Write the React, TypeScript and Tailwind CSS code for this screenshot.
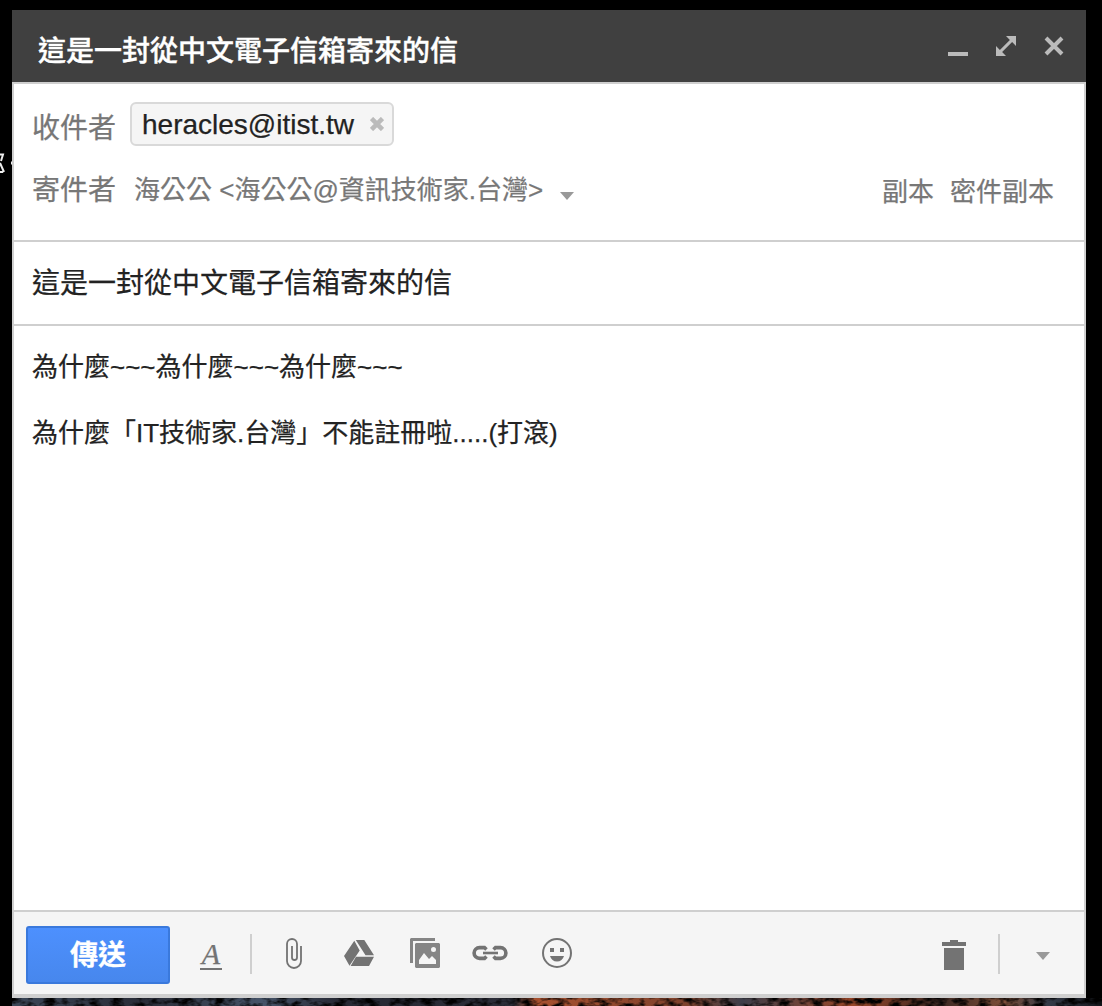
import type { ReactNode } from "react";

const compose = {
  subject: "這是一封從中文電子信箱寄來的信",
  to: "heracles@itist.tw",
  from: "海公公 <海公公@資訊技術家.台灣>",
  lines: ["為什麼~~~為什麼~~~為什麼~~~", "為什麼「IT技術家.台灣」不能註冊啦.....(打滾)"],
};

function Caret({ className = "" }: { className?: string }) {
  return (
    <svg width="14" height="8" viewBox="0 0 14 8" fill="#999" className={`shrink-0 ${className}`}>
      <path d="M0 0h14L7 8z" />
    </svg>
  );
}

function Header() {
  return (
    <header className="flex h-[72px] shrink-0 items-start justify-between bg-[#404040] pl-[26px] pr-[22px] text-white">
      <h1 className="pt-[22px] text-[28px] leading-10 font-medium [-webkit-text-stroke:0.4px]">{compose.subject}</h1>
      <div className="flex gap-7 pt-[26px] text-[#bbb]">
        <svg width="20" height="20" viewBox="0 0 20 20" fill="currentColor">
          <path d="M0 16h20v4H0z" />
        </svg>
        <svg width="20" height="20" viewBox="0 0 20 20" fill="currentColor">
          <path d="M10 0h10v10l-3.9-3.9-10 10L10 20H0V10l3.9 3.9 10-10z" />
        </svg>
        <svg width="20" height="20" viewBox="0 0 20 20" stroke="currentColor" strokeWidth="4">
          <path d="M2 2l16 16M18 2L2 18" />
        </svg>
      </div>
    </header>
  );
}

function Recipients() {
  return (
    <section className="h-[158px] shrink-0 border-t-2 border-[#cfcfcf] pt-[18px] pl-[18px] pr-[30px] text-[#777]">
      <div className="flex h-11 items-start">
        <span className="w-[98px] pt-[7px] text-[28px] leading-10">收件者</span>
        <span className="flex h-11 w-[264px] items-center justify-between rounded-md border-2 border-[#d9d9d9] bg-[#f5f5f5] pl-2.5 pr-2 text-[28px] text-[#222]">
          <span className="pt-0.5">{compose.to}</span>
          <svg width="14" height="14" viewBox="0 0 14 14" stroke="#bbb" strokeWidth="4.6">
            <path d="M1.5 1.5l11 11M12.5 1.5l-11 11" />
          </svg>
        </span>
      </div>
      <div className="mt-6 flex items-start">
        <span className="w-[102px] pt-px text-[28px] leading-10">寄件者</span>
        <span className="text-[26px] leading-10">{compose.from}</span>
        <Caret className="mt-[22px] ml-[17px]" />
        <div className="ml-auto flex gap-4 pt-px text-[26px] leading-[42px]">
          <span>副本</span>
          <span>密件副本</span>
        </div>
      </div>
    </section>
  );
}

function Tool({ width, children }: { width: number; children: ReactNode }) {
  return (
    <svg width={width} height="32" viewBox={`0 0 ${width} 32`} fill="currentColor" className="shrink-0">
      {children}
    </svg>
  );
}

function Toolbar() {
  return (
    <footer className="flex h-[84px] shrink-0 items-center border-t-2 border-[#cfcfcf] bg-[#f5f5f5] pl-3 pr-[34px] text-[#737373]">
      <button className="mt-1 h-[58px] w-36 rounded-[3px] border-2 border-[#3a79dc] bg-linear-to-b from-[#4d90fe] to-[#4787ed] pt-px text-[28px] leading-none font-bold text-white">
        傳送
      </button>
      <span className="mt-0.5 ml-[30px] h-8 w-[22px] border-b-2 border-current text-center font-['Liberation_Serif',serif] text-[30px] leading-[31px] italic">
        A
      </span>
      <span className="mt-0.5 ml-7 h-10 w-0.5 bg-[#cfcfcf]" />
      <div className="ml-[33px] flex items-center">
        <Tool width={18}>
          <path
            d="M16 9v15a7 7 0 0 1-14 0V7a5 5 0 0 1 10 0v13.5a2.5 2.5 0 0 1-5 0V9"
            fill="none"
            stroke="currentColor"
            strokeWidth="1.8"
          />
        </Tool>
        <span className="w-[41px]" />
        <Tool width={30}>
          <path d="M11.8 3h8.5L30 18.3h-8.5zM10.3 3.8l5.4 9.6L5.5 28.8 0 19zM12 19.8h18L25 29H6.6z" />
        </Tool>
        <span className="w-9" />
        <Tool width={30}>
          <g fill="#858585">
            <path d="M1 1h24v3H3v22H0V2z" />
            <path
              fillRule="evenodd"
              d="M6 6h23l1 1v23l-1 1H6l-1-1V7zM9 27h17v-4l-4-4-3 3-5-6-5 7zM23.5 10a2.5 2.5 0 1 0 0 5 2.5 2.5 0 0 0 0-5z"
            />
          </g>
        </Tool>
        <span className="w-8" />
        <Tool width={36}>
          <path
            d="M14.5 19.5l-2 1.9h-5a5.4 5.4 0 0 1 0-10.800h5l2 1.9M21.5 12.5l2-1.9h5a5.4 5.4 0 0 1 0 10.800h-5l-2-1.900"
            fill="none"
            stroke="currentColor"
            strokeWidth="3.6"
          />
          <path d="M11 14.7h15v2.6H11z" />
        </Tool>
        <span className="w-[34px]" />
        <Tool width={30}>
          <circle cx="15" cy="16" r="14" fill="none" stroke="currentColor" strokeWidth="2" />
          <path d="M8 11h4v4H8zM18 11h4v4h-4zM8 19h14c-1 3.5-3.5 5.5-7 5.5S9 22.5 8 19z" />
        </Tool>
      </div>
      <div className="mt-0.5 ml-auto flex items-center">
        <Tool width={24}>
          <path d="M8 2h8v2h8v4H0V4h8zM2 10h20v22H2z" />
        </Tool>
        <span className="ml-8 h-10 w-0.5 bg-[#cfcfcf]" />
        <Caret className="mt-1 ml-9" />
      </div>
    </footer>
  );
}

// Sliver of the desktop wallpaper below the window
function Wallpaper() {
  return (
    <svg width="1090" height="8" className="block">
      <defs>
        <linearGradient id="wall">
          <stop offset="0" stopColor="#3b4758" />
          <stop offset="0.12" stopColor="#292c37" />
          <stop offset="0.23" stopColor="#465469" />
          <stop offset="0.3" stopColor="#272934" />
          <stop offset="0.46" stopColor="#2b2d38" />
          <stop offset="0.48" stopColor="#a8512f" />
          <stop offset="0.62" stopColor="#7d412c" />
          <stop offset="0.67" stopColor="#3d3e4a" />
          <stop offset="0.77" stopColor="#994628" />
          <stop offset="0.85" stopColor="#3a2722" />
          <stop offset="0.91" stopColor="#7d4e38" />
          <stop offset="0.95" stopColor="#343b48" />
          <stop offset="1" stopColor="#15171d" />
        </linearGradient>
        <filter id="grain" x="0" y="0" width="100%" height="100%">
          <feTurbulence type="fractalNoise" baseFrequency="0.09 0.16" numOctaves="3" seed="4" />
          <feColorMatrix values="0 0 0 0 0  0 0 0 0 0  0 0 0 0 0  3 0 0 0 -1.2" />
        </filter>
      </defs>
      <rect width="1090" height="8" fill="url(#wall)" />
      <rect width="1090" height="8" filter="url(#grain)" />
    </svg>
  );
}

export default function App() {
  return (
    <div className="relative h-[1006px] w-[1102px] overflow-hidden bg-black px-3 pt-2.5 font-['Liberation_Sans','Noto_Sans_CJK_TC',sans-serif] [-webkit-text-stroke:0.25px]">
      <svg width="12" height="26" viewBox="0 0 12 26" fill="none" stroke="#eee" className="absolute top-[150px] left-0">
        <path d="M0 4.5h3L1 11M0 13l4 9M0 22h3" strokeWidth="2" />
        <path d="M11 13h2" strokeWidth="3" />
      </svg>
      <main className="flex h-[988px] w-[1074px] flex-col bg-white">
        <Header />
        <div className="flex min-h-0 grow flex-col border-x-2 border-b-4 border-[#cfcfcf]">
          <Recipients />
          <div className="h-[84px] shrink-0 border-t-2 border-[#cfcfcf] bg-white pt-[22px] pl-[18px] text-[28px] leading-10 text-[#222]">
            {compose.subject}
          </div>
          <div className="grow border-t-2 border-[#cfcfcf] pt-[21px] pl-[18px] text-[26px] leading-10 text-[#222]">
            {compose.lines.map((line) => (
              <p key={line} className="mb-[26px]">
                {line}
              </p>
            ))}
          </div>
          <Toolbar />
        </div>
      </main>
      <Wallpaper />
    </div>
  );
}
